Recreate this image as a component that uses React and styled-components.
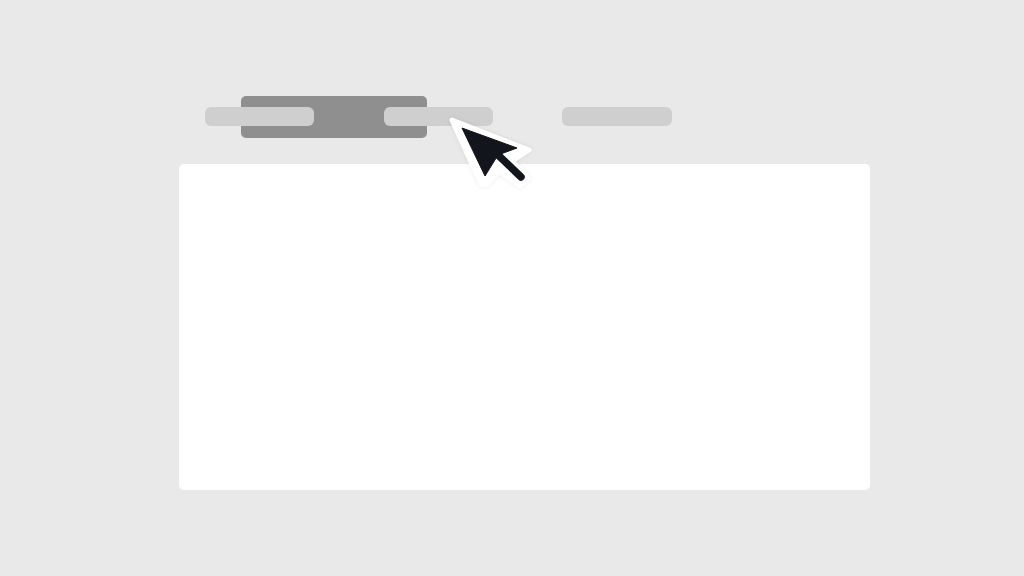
import styled, { createGlobalStyle } from "styled-components";

const GlobalStyle = createGlobalStyle`
  html, body {
    margin: 0;
    height: 100%;
    background: #e9e9e9;
    font-family: "Liberation Sans", sans-serif;
  }
`;

export default function App() {
  return (
    <>
      <GlobalStyle />
      <Page>
        <Frame>
          <TabBar>
            <Highlight />
            <Tab />
            <Tab />
            <Tab />
            <Pointer />
          </TabBar>
          <Panel />
        </Frame>
      </Page>
    </>
  );
}

function Pointer() {
  return (
    <Cursor viewBox="0 0 100 90" width="100" height="90">
      <path
        d="M12 10 L89 40 L72 51 L88 68 L80 76 L59 61 L46 75 L41 74 Z"
        fill="#fff"
        stroke="#fff"
        strokeWidth="5"
        strokeLinejoin="round"
      />
      <path d="M22 18 L77 38 L58 45 L45 66 Z" fill="#12161c" stroke="#12161c" strokeWidth="1" strokeLinejoin="round" />
      <path d="M56 43 L81 67" stroke="#12161c" strokeWidth="7.5" strokeLinecap="round" />
    </Cursor>
  );
}

const Page = styled.div`
  width: 1024px;
  height: 576px;
  padding: 96px 0 0 179px;
  box-sizing: border-box;
  overflow: hidden;
`;

const Frame = styled.div`
  width: 691px;
  display: flex;
  flex-direction: column;
  gap: 26px;
`;

const TabBar = styled.div`
  position: relative;
  height: 41.6px;
  padding-left: 25.8px;
  display: flex;
  align-items: center;
  gap: 69.5px;
`;

const Highlight = styled.div`
  position: absolute;
  left: 62px;
  top: 0;
  width: 186px;
  height: 41.6px;
  border-radius: 5px;
  background: #8f8f8f;
`;

const Tab = styled.div`
  position: relative;
  width: 109.3px;
  height: 19.4px;
  border-radius: 6px;
  background: #cfcfcf;
`;

const Cursor = styled.svg`
  position: absolute;
  left: 261px;
  top: 14px;
  z-index: 1;
  filter: drop-shadow(0 0 2px rgba(0, 0, 0, 0.08));
`;

const Panel = styled.div`
  height: 326.4px;
  border-radius: 5px;
  background: #fff;
`;
